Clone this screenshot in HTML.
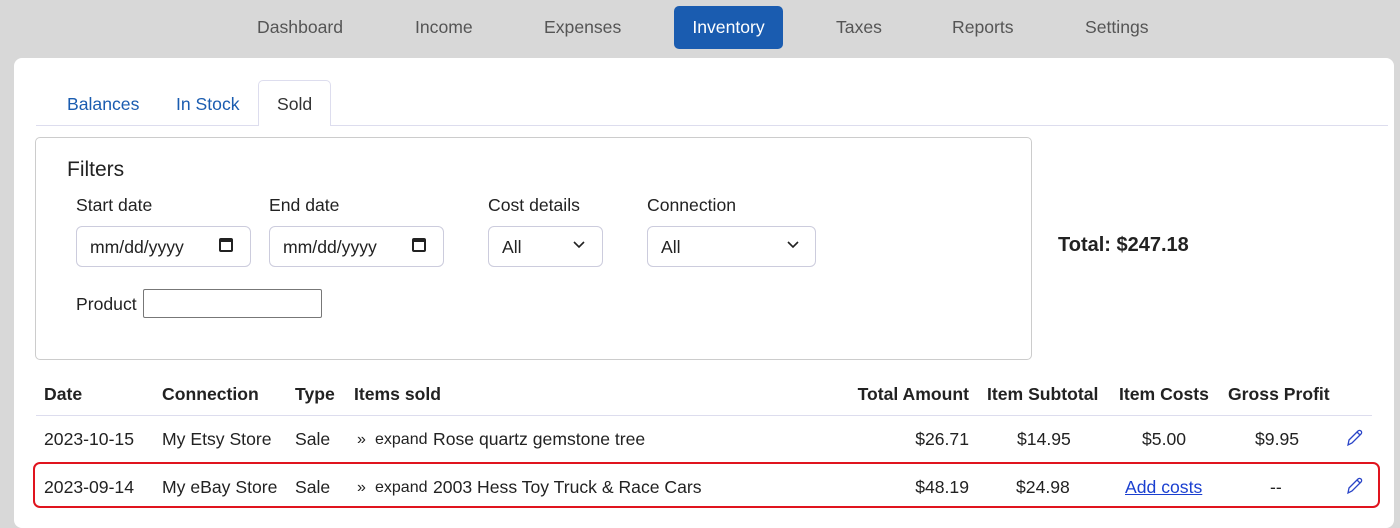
<!DOCTYPE html>
<html><head><meta charset="utf-8"><style>
*{margin:0;padding:0;box-sizing:border-box}
body{width:1400px;height:510px;background:#d8d8d8;font-family:"Liberation Sans",Arial,sans-serif;color:#222;position:relative;overflow:hidden;font-size:17.6px}
.a{position:absolute;white-space:nowrap}
.nav{top:17px;font-size:17.6px;color:#555}
.panel{position:absolute;left:14px;top:58px;width:1380px;height:470px;background:#fff;border-radius:8px}
.inp{position:absolute;border:1px solid #ccd;border-radius:6px;height:41px;top:226px;background:#fff}
.b{font-weight:bold}
.ex{font-size:16px}
</style></head><body>
<div class="a nav" style="left:257px">Dashboard</div>
<div class="a nav" style="left:415px">Income</div>
<div class="a nav" style="left:544px">Expenses</div>
<div class="a" style="left:674px;top:6px;width:109px;height:43px;background:#1a5cb0;border-radius:5px;color:#fff;text-align:center;line-height:43px">Inventory</div>
<div class="a nav" style="left:836px">Taxes</div>
<div class="a nav" style="left:952px">Reports</div>
<div class="a nav" style="left:1085px">Settings</div>
<div class="panel"></div>
<div class="a" style="left:36px;top:125px;width:1352px;height:1px;background:#dde"></div>
<div class="a" style="left:258px;top:80px;width:73px;height:46px;background:#fff;border:1px solid #dde;border-bottom:none;border-radius:5px 5px 0 0"></div>
<div class="a" style="left:67px;top:94px;color:#1a5cb0">Balances</div>
<div class="a" style="left:176px;top:94px;color:#1a5cb0">In Stock</div>
<div class="a" style="left:277px;top:94px;color:#333">Sold</div>
<div class="a" style="left:35px;top:137px;width:997px;height:223px;border:1px solid #ccc;border-radius:5px"></div>
<div class="a" style="left:67px;top:158px;font-size:21px">Filters</div>
<div class="a" style="left:76px;top:195px">Start date</div>
<div class="a" style="left:269px;top:195px">End date</div>
<div class="a" style="left:488px;top:195px">Cost details</div>
<div class="a" style="left:647px;top:195px">Connection</div>
<div class="inp" style="left:76px;width:175px"></div>
<div class="inp" style="left:269px;width:175px"></div>
<div class="inp" style="left:488px;width:115px"></div>
<div class="inp" style="left:647px;width:169px"></div>
<div class="a" style="left:90px;top:237px">mm/dd/yyyy</div>
<div class="a" style="left:283px;top:237px">mm/dd/yyyy</div>
<div class="a" style="left:219px;top:238px;width:14px;height:14px;border:2px solid #222;border-top-width:4px;border-radius:2px"></div>
<div class="a" style="left:412px;top:238px;width:14px;height:14px;border:2px solid #222;border-top-width:4px;border-radius:2px"></div>
<div class="a" style="left:502px;top:237px">All</div>
<div class="a" style="left:661px;top:237px">All</div>
<svg class="a" style="left:573px;top:241px" width="12" height="8"><path d="M1 1l5 5 5-5" stroke="#222" stroke-width="1.6" fill="none"/></svg>
<svg class="a" style="left:787px;top:241px" width="12" height="8"><path d="M1 1l5 5 5-5" stroke="#222" stroke-width="1.6" fill="none"/></svg>
<div class="a" style="left:76px;top:294px">Product</div>
<div class="a" style="left:143px;top:289px;width:179px;height:29px;border:1px solid #777;border-radius:2px"></div>
<div class="a b" style="left:1058px;top:234px;font-size:20px">Total: $247.18</div>
<div class="a b" style="left:44px;top:384px">Date</div>
<div class="a b" style="left:162px;top:384px">Connection</div>
<div class="a b" style="left:295px;top:384px">Type</div>
<div class="a b" style="left:354px;top:384px">Items sold</div>
<div class="a b" style="right:431px;top:384px">Total Amount</div>
<div class="a b" style="left:987px;top:384px">Item Subtotal</div>
<div class="a b" style="left:1119px;top:384px">Item Costs</div>
<div class="a b" style="left:1228px;top:384px">Gross Profit</div>
<div class="a" style="left:36px;top:415px;width:1336px;height:1px;background:#dde"></div>
<div class="a" style="left:33px;top:462px;width:1347px;height:46px;border:2px solid #e0141e;border-radius:7px"></div>
<div class="a" style="left:44px;top:429px">2023-10-15</div>
<div class="a" style="left:162px;top:429px">My Etsy Store</div>
<div class="a" style="left:295px;top:429px">Sale</div>
<div class="a ex" style="left:357px;top:431px">»</div><div class="a ex" style="left:375px;top:431px">expand</div>
<div class="a" style="left:433px;top:429px">Rose quartz gemstone tree</div>
<div class="a" style="right:431px;top:429px">$26.71</div>
<div class="a" style="left:1017px;top:429px">$14.95</div>
<div class="a" style="left:1142px;top:429px">$5.00</div>
<div class="a" style="left:1255px;top:429px">$9.95</div>
<div class="a" style="left:44px;top:477px">2023-09-14</div>
<div class="a" style="left:162px;top:477px">My eBay Store</div>
<div class="a" style="left:295px;top:477px">Sale</div>
<div class="a ex" style="left:357px;top:479px">»</div><div class="a ex" style="left:375px;top:479px">expand</div>
<div class="a" style="left:433px;top:477px">2003 Hess Toy Truck &amp; Race Cars</div>
<div class="a" style="right:431px;top:477px">$48.19</div>
<div class="a" style="left:1016px;top:477px">$24.98</div>
<div class="a" style="left:1125px;top:477px;color:#1a3fd0;text-decoration:underline">Add costs</div>
<div class="a" style="left:1270px;top:477px">--</div>
<svg class="a" style="left:1345px;top:428px" width="20" height="20"><path d="M3 17l1-5 9-9a2 2 0 0 1 3 3l-9 9z M12 4l3 3" stroke="#2a45c8" stroke-width="1.3" fill="none"/></svg>
<svg class="a" style="left:1345px;top:476px" width="20" height="20"><path d="M3 17l1-5 9-9a2 2 0 0 1 3 3l-9 9z M12 4l3 3" stroke="#2a45c8" stroke-width="1.3" fill="none"/></svg>
</body></html>
